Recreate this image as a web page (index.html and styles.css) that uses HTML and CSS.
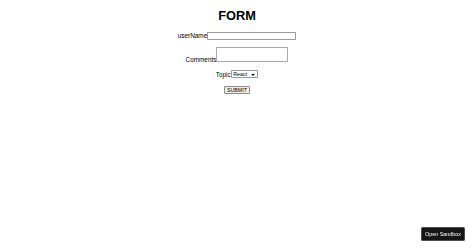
FILE: index.html
```html
<!DOCTYPE html>
<html>
<head>
<meta charset="utf-8">
<link rel="stylesheet" href="styles.css">
</head>
<body>
<div class="page">
  <h1 class="title">FORM</h1>
  <form class="form">
    <div class="row row-user">
      <label class="label">userName</label><input class="text-input" type="text">
    </div>
    <div class="row row-comments">
      <label class="label">Comments</label><textarea class="textarea"></textarea>
    </div>
    <div class="row row-topic">
      <label class="label">Topic</label><select class="select"><option>React</option></select>
    </div>
    <div class="row row-submit">
      <button class="submit" type="button">SUBMIT</button>
    </div>
  </form>
</div>
<button class="sandbox" type="button">Open Sandbox</button>
</body>
</html>
```
FILE: styles.css
```css
html, body {
  margin: 0;
  padding: 0;
  background: #ffffff;
}
body {
  font-family: "Liberation Sans", Arial, sans-serif;
  font-size: 6.4px;
  color: #000;
  width: 474px;
  height: 248px;
  overflow: hidden;
}
.page {
  display: flex;
  flex-direction: column;
  align-items: center;
  padding-top: 8.6px;
}
.title {
  margin: 0;
  font-size: 12.8px;
  line-height: 14.7px;
  font-weight: bold;
}
.form {
  display: flex;
  flex-direction: column;
  align-items: center;
  margin-top: 8.6px;
}
.row {
  display: flex;
  align-items: flex-end;
  justify-content: center;
}
.label {
  font-size: 6.4px;
  line-height: 7px;
}
.row-user .label { line-height: 8px; }
.text-input {
  box-sizing: border-box;
  width: 89px;
  height: 8.4px;
  margin: 0;
  padding: 0;
  border: 0.6px solid #9a9a9a;
  border-radius: 0.8px;
  font-size: 5.3px;
  background: #fff;
}
.row-comments { margin-top: 7.2px; }
.row-comments .label { line-height: 5px; }
.textarea {
  box-sizing: border-box;
  width: 72px;
  height: 14.6px;
  margin: 0;
  padding: 0;
  border: 0.6px solid #a8a8a8;
  border-radius: 0.8px;
  resize: none;
  font-size: 5.3px;
  display: block;
}
.row-topic { margin-top: 8px; align-items: center; }
.select {
  box-sizing: border-box;
  -webkit-appearance: none;
  appearance: none;
  width: 27.5px;
  height: 8px;
  margin: 0;
  padding: 0 0 0 1.5px;
  border: 0.6px solid #9a9a9a;
  border-radius: 0.8px;
  font-family: "Liberation Sans", Arial, sans-serif;
  font-size: 5.3px;
  line-height: 6.6px;
  color: #000;
  background-color: #fff;
  background-image: url("data:image/svg+xml,%3Csvg xmlns='http://www.w3.org/2000/svg' width='6' height='4' viewBox='0 0 6 4'%3E%3Cpath d='M1 1 L3 3 L5 1' fill='none' stroke='%23000' stroke-width='1.4'/%3E%3C/svg%3E");
  background-repeat: no-repeat;
  background-position: right 2px center;
  background-size: 3.8px 2.6px;
}
.row-submit { margin-top: 8px; }
.submit {
  box-sizing: border-box;
  width: 26px;
  height: 8.4px;
  margin: 0;
  padding: 0;
  border: 0.6px solid #8a8a8a;
  border-radius: 1px;
  background: #efefef;
  font-family: "Liberation Sans", Arial, sans-serif;
  font-size: 5.3px;
  line-height: 7px;
  color: #000;
}
.sandbox {
  position: fixed;
  right: 9px;
  bottom: 7px;
  box-sizing: border-box;
  width: 44px;
  height: 14px;
  margin: 0;
  padding: 0;
  border: 0.6px solid rgba(255,255,255,0.25);
  border-radius: 1.6px;
  background: #151515;
  color: #fff;
  font-family: "Liberation Sans", Arial, sans-serif;
  font-size: 5.4px;
  line-height: 13px;
}
```
